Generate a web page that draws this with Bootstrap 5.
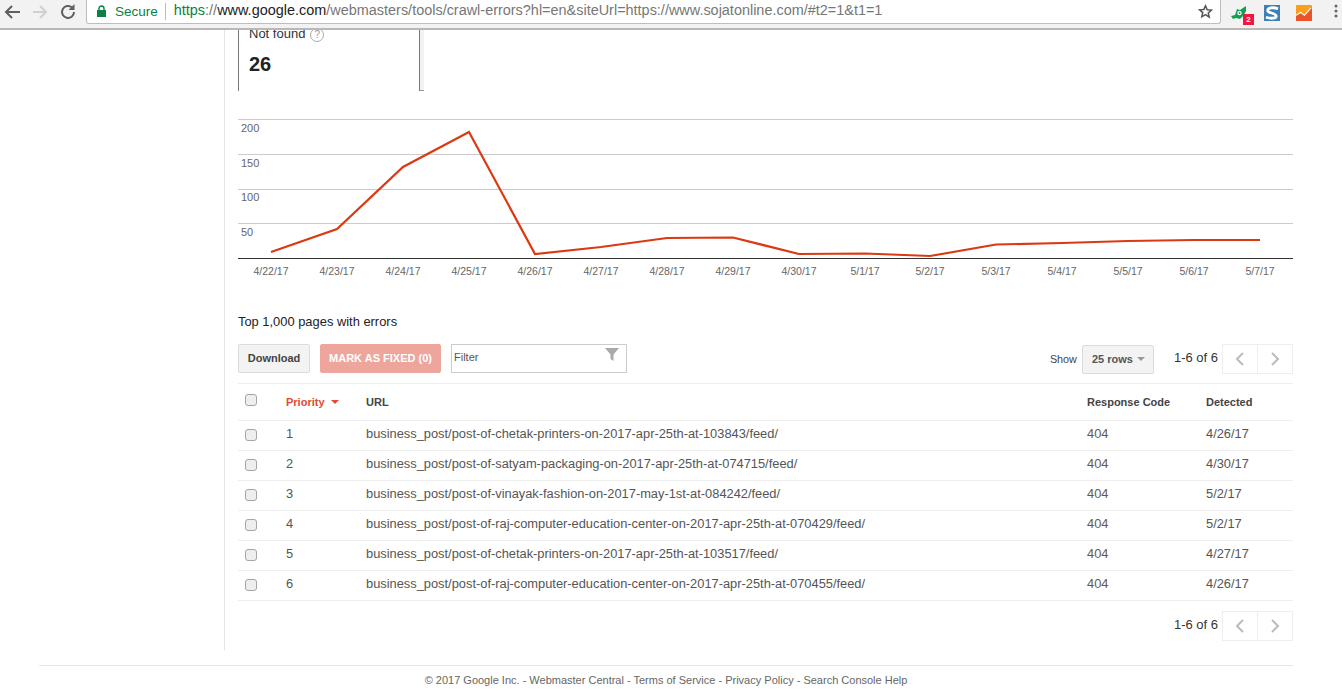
<!DOCTYPE html>
<html lang="en">
<head>
<meta charset="utf-8">
<title>Crawl Errors</title>
<link rel="stylesheet" href="https://cdn.jsdelivr.net/npm/bootstrap@5.3.0/dist/css/bootstrap.min.css">
<style>
html,body{height:698px;overflow:hidden}
body{font-family:"Liberation Sans",Arial,sans-serif;font-size:12px;color:#333;background:#fff}
.chrome-bar{height:30px;background:#f2f2f2;border-bottom:2px solid #b8b8b8;padding-left:1px;position:relative;z-index:2}
.nav-ic{width:22px;height:22px;flex:none;margin-bottom:4px}
.nav-gap{margin-left:6px}
.omni{height:25px;width:1135px;background:#fff;border:1px solid #bdbdbd;border-top:0;border-radius:0 0 3px 3px;margin-left:7px;margin-top:-5px;padding-left:10px;font-size:14.45px;white-space:nowrap;flex:none}
.secure{color:#0b8043;font-size:13.5px;padding-left:9px;padding-right:7px;border-right:1px solid #bbb;margin-right:8px;line-height:17px}
.url-main{color:#222}.url-soft{color:#777}.url-https{color:#0b8043}
.star-ic{margin-right:7px}
.ext-ic{position:relative;width:20px;height:20px;flex:none;margin-left:10px;margin-bottom:2px}
.ext-badge{position:absolute;left:12px;top:11px;width:11px;height:11px;background:#f5163f;color:#fff;font-size:8px;font-weight:700;line-height:11px;text-align:center}
.ext-s,.ext-a{margin-bottom:3px;flex:none}
.ext-s{margin-left:13px}.ext-a{margin-left:16px}.ext-d{margin-left:22px;margin-bottom:6px;flex:none}
.page-wrap{height:620px}
.side-col{width:225px;flex:none;border-right:1px solid #e5e5e5}
.main-col{width:1055px;margin-left:13px}
.err-tab{width:182px;height:61px;border-left:1px solid #777;border-right:1px solid #777;padding-left:10px;background:#fff}
.err-tabside{width:4px;height:61px;background:#f2f2f2;border-bottom:1px solid #999}
.err-name{font-size:13px;color:#333;line-height:8px;height:9px;display:flex;align-items:center}
.err-label{padding-bottom:2px}
.help-q{display:inline-flex;width:14px;height:14px;flex:none;border:1px solid #aaa;border-radius:50%;color:#999;font-size:10px;align-items:center;justify-content:center;margin-left:5px}
.err-num{font-size:20px;font-weight:700;color:#222;line-height:24px;margin-top:13px}
.chart-box{display:block;margin-top:28px;width:1055px;height:171px}
.top-label{font-size:12.9px;color:#222;line-height:14px;margin-top:25px}
.tool-row{height:30px;margin-top:15px}
.gbtn{height:29px;border:1px solid #dcdcdc;background:#f3f3f3;color:#444;font-size:11px;font-weight:700;border-radius:2px;padding:0;line-height:27px;width:72px}
.gbtn-red{background:#eea59c;border-color:#eea59c;color:#fff;margin-left:10px;width:121px}
.filter-box{width:176px;height:29px;border:1px solid #ccc;margin-left:10px;padding-left:2px;font-size:11px;color:#555;line-height:24px;position:relative}
.filter-ic{position:absolute;right:7px;top:3px}
.show-lbl{font-size:10.8px;color:#444;margin-right:5px}
.rows-btn{padding:0 9px;color:#555;white-space:nowrap;text-align:left}
.caret-g{display:inline-block;border:4px solid transparent;border-top-color:#999;border-bottom:0;margin-left:4px;vertical-align:2px}
.pager-txt{font-size:13px;color:#333;margin:0 4px 2px 20px;line-height:14px}
.pg-btn{width:36px;height:30px;border:1px solid #eee;display:inline-flex;align-items:center;justify-content:center;background:#fff}
.pg-btn+.pg-btn{margin-left:-1px}
.err-table{margin:9px 0 0;table-layout:fixed;width:1055px;border-top:1px solid #eee}
.err-table th,.err-table td{padding:0 0 4px;border-bottom:1px solid #eee;height:30px;font-size:12.85px;vertical-align:middle;color:#555;font-weight:400;box-shadow:none}
.err-table th{height:37px;font-size:11px;font-weight:700;color:#444;padding:0}
.err-table td:first-child{padding:0 0 2px}
.err-table th:first-child{padding:0 0 4px}
.err-table .form-check-input{width:12px;height:12px;margin:0 0 0 7px;display:block;background-color:#eee;border:1px solid #a5a5a5;border-radius:3px}
.err-table th.prio{color:#dd4b39}
.prio-car{display:inline-block;border:4px solid transparent;border-top-color:#dd4b39;border-bottom:0;margin-left:6px;vertical-align:2px}
.err-table td.code{color:#6b5a3e}
.foot-pager{height:30px;margin-top:10px}
.foot-line{border-top:1px solid #e5e5e5;margin:15px 49px 0 39px;padding-top:8px;text-align:center;font-size:11px;color:#666;line-height:13px}
</style>
</head>
<body>
<div class="chrome-bar d-flex align-items-center">
  <svg class="nav-ic" viewBox="0 0 22 22" aria-hidden="true"><path d="M19 11H6M11 5L5 11l6 6" fill="none" stroke="#5f5f5f" stroke-width="2"/></svg>
  <svg class="nav-ic nav-gap" viewBox="0 0 22 22" aria-hidden="true"><path d="M4 11h13M11 5l6 6-6 6" fill="none" stroke="#d0d0d0" stroke-width="2"/></svg>
  <svg class="nav-ic nav-gap" viewBox="0 0 22 22" aria-hidden="true"><path d="M17 11a6 6 0 1 1-2-4.500" fill="none" stroke="#5f5f5f" stroke-width="2"/><path d="M17.500 3v6h-6z" fill="#5f5f5f"/></svg>
  <div class="omni d-flex align-items-center">
    <svg width="9" height="13" viewBox="0 0 9 13" aria-hidden="true"><rect y="5" width="9" height="7" fill="#0b8043"/><path d="M2 5.500V3.500a2.500 2.500 0 0 1 5 0V5.500" fill="none" stroke="#0b8043" stroke-width="1.400"/></svg>
    <span class="secure">Secure</span>
    <span><span class="url-https">https</span><span class="url-soft">://</span><span class="url-main">www.google.com</span><span class="url-soft">/webmasters/tools/crawl-errors?hl=en&amp;siteUrl=https://www.sojatonline.com/#t2=1&amp;t1=1</span></span>
    <svg class="ms-auto star-ic" width="15" height="15" viewBox="0 0 24 24" aria-hidden="true"><path d="M12 3l2.700 6.200 6.800.6-5.100 4.500 1.500 6.700L12 17l-5.900 3.500 1.500-6.700-5.100-4.500 6.800-.6z" fill="none" stroke="#555" stroke-width="2.400"/></svg>
  </div>
  <div class="ext-ic">
    <svg width="16" height="14" viewBox="0 0 16 14" aria-hidden="true"><path d="M0 10l4-1 2-6 3 1 6-4v5l-2 4-4 4-4-1-3 1z" fill="#12a150"/><circle cx="8.500" cy="7" r="2.200" fill="#fff"/><circle cx="8.500" cy="7" r="1" fill="#12a150"/></svg>
    <span class="ext-badge">2</span>
  </div>
  <svg class="ext-s" width="16" height="16" viewBox="0 0 17 17" aria-hidden="true"><rect width="17" height="17" fill="#3f7fb5"/><path d="M15 4C9 2 4 3 4 6c0 3 9 2 9 6 0 2-5 3-11 1" fill="none" stroke="#fff" stroke-width="3"/></svg>
  <svg class="ext-a" width="16" height="16" viewBox="0 0 17 17" aria-hidden="true"><rect width="17" height="17" rx="1" fill="#f9a01b"/><path d="M0 17V11l5-3 4 3 8-9v15z" fill="#e8552d"/><path d="M0 11l5-3 4 3 7-8" fill="none" stroke="#fff" stroke-width="1.200"/></svg>
  <svg class="ext-d" width="4" height="14" viewBox="0 0 4 14" aria-hidden="true"><circle cx="2" cy="2" r="1.500" fill="#666"/><circle cx="2" cy="7" r="1.500" fill="#666"/><circle cx="2" cy="12" r="1.500" fill="#666"/></svg>
</div>

<div class="page-wrap d-flex">
  <div class="side-col"></div>
  <div class="main-col">
    <div class="d-flex">
      <div class="err-tab">
        <div class="err-name"><span class="err-label">Not found</span><span class="help-q">?</span></div>
        <div class="err-num">26</div>
      </div>
      <div class="err-tabside"></div>
    </div>

    <svg class="chart-box" viewBox="238 119 1055 171" role="img" aria-label="Not found errors per day" font-family="Liberation Sans, Arial, sans-serif" font-size="11" fill="#666">
      <g stroke="#ccc" stroke-width="1" shape-rendering="crispEdges">
        <path d="M238 119.500H1293M238 154.500H1293M238 189.500H1293M238 223.500H1293"/>
      </g>
      <path d="M238 258.500H1293" stroke="#333" stroke-width="1" shape-rendering="crispEdges"/>
      <text x="241" y="132">200</text><text x="241" y="167">150</text><text x="241" y="201">100</text><text x="241" y="236">50</text>
      <polyline fill="none" stroke="#dc3912" stroke-width="2.200" points="271,252 337,229 403,167 469,132 535,254 601,247 667,238 733,237.500 799,254 865,253.500 930,256 996,244.500 1062,243 1128,241 1194,240 1260,240"/>
      <g text-anchor="middle" font-size="10.500">
        <text x="271" y="275">4/22/17</text><text x="337" y="275">4/23/17</text><text x="403" y="275">4/24/17</text><text x="469" y="275">4/25/17</text><text x="535" y="275">4/26/17</text><text x="601" y="275">4/27/17</text><text x="667" y="275">4/28/17</text><text x="733" y="275">4/29/17</text><text x="799" y="275">4/30/17</text><text x="865" y="275">5/1/17</text><text x="930" y="275">5/2/17</text><text x="996" y="275">5/3/17</text><text x="1062" y="275">5/4/17</text><text x="1128" y="275">5/5/17</text><text x="1194" y="275">5/6/17</text><text x="1260" y="275">5/7/17</text>
      </g>
    </svg>

    <div class="top-label">Top 1,000 pages with errors</div>

    <div class="tool-row d-flex align-items-start">
      <button type="button" class="gbtn">Download</button>
      <button type="button" class="gbtn gbtn-red">MARK AS FIXED (0)</button>
      <div class="filter-box">Filter
        <svg class="filter-ic" width="14" height="13" viewBox="0 0 14 13" aria-hidden="true"><path d="M0 0h14L8.500 6.500V13L5.500 11V6.500z" fill="#aaa"/></svg>
      </div>
      <div class="ms-auto d-flex align-items-center">
        <span class="show-lbl">Show</span>
        <button type="button" class="gbtn rows-btn">25 rows<span class="caret-g"></span></button>
        <span class="pager-txt">1-6 of 6</span>
        <span class="pg-btn"><svg width="10" height="14" viewBox="0 0 10 14" aria-hidden="true"><path d="M8 1L2 7l6 6" fill="none" stroke="#bbb" stroke-width="2"/></svg></span>
        <span class="pg-btn"><svg width="10" height="14" viewBox="0 0 10 14" aria-hidden="true"><path d="M2 1l6 6-6 6" fill="none" stroke="#bbb" stroke-width="2"/></svg></span>
      </div>
    </div>

    <table class="table err-table">
      <colgroup><col style="width:48px"><col style="width:80px"><col style="width:721px"><col style="width:119px"><col style="width:87px"></colgroup>
      <thead>
        <tr><th><input class="form-check-input" type="checkbox" aria-label="Select all"></th><th class="prio">Priority<span class="prio-car"></span></th><th>URL</th><th>Response Code</th><th>Detected</th></tr>
      </thead>
      <tbody>
        <tr><td><input class="form-check-input" type="checkbox" aria-label="Select row 1"></td><td>1</td><td>business_post/post-of-chetak-printers-on-2017-apr-25th-at-103843/feed/</td><td class="code">404</td><td>4/26/17</td></tr>
        <tr><td><input class="form-check-input" type="checkbox" aria-label="Select row 2"></td><td>2</td><td>business_post/post-of-satyam-packaging-on-2017-apr-25th-at-074715/feed/</td><td class="code">404</td><td>4/30/17</td></tr>
        <tr><td><input class="form-check-input" type="checkbox" aria-label="Select row 3"></td><td>3</td><td>business_post/post-of-vinayak-fashion-on-2017-may-1st-at-084242/feed/</td><td class="code">404</td><td>5/2/17</td></tr>
        <tr><td><input class="form-check-input" type="checkbox" aria-label="Select row 4"></td><td>4</td><td>business_post/post-of-raj-computer-education-center-on-2017-apr-25th-at-070429/feed/</td><td class="code">404</td><td>5/2/17</td></tr>
        <tr><td><input class="form-check-input" type="checkbox" aria-label="Select row 5"></td><td>5</td><td>business_post/post-of-chetak-printers-on-2017-apr-25th-at-103517/feed/</td><td class="code">404</td><td>4/27/17</td></tr>
        <tr><td><input class="form-check-input" type="checkbox" aria-label="Select row 6"></td><td>6</td><td>business_post/post-of-raj-computer-education-center-on-2017-apr-25th-at-070455/feed/</td><td class="code">404</td><td>4/26/17</td></tr>
      </tbody>
    </table>

    <div class="foot-pager d-flex justify-content-end align-items-center">
      <span class="pager-txt">1-6 of 6</span>
      <span class="pg-btn"><svg width="10" height="14" viewBox="0 0 10 14" aria-hidden="true"><path d="M8 1L2 7l6 6" fill="none" stroke="#bbb" stroke-width="2"/></svg></span>
      <span class="pg-btn"><svg width="10" height="14" viewBox="0 0 10 14" aria-hidden="true"><path d="M2 1l6 6-6 6" fill="none" stroke="#bbb" stroke-width="2"/></svg></span>
    </div>
  </div>
</div>
<div class="foot-line">© 2017 Google Inc. - Webmaster Central - Terms of Service - Privacy Policy - Search Console Help</div>
<script src="https://cdn.jsdelivr.net/npm/bootstrap@5.3.0/dist/js/bootstrap.bundle.min.js"></script>
</body>
</html>
